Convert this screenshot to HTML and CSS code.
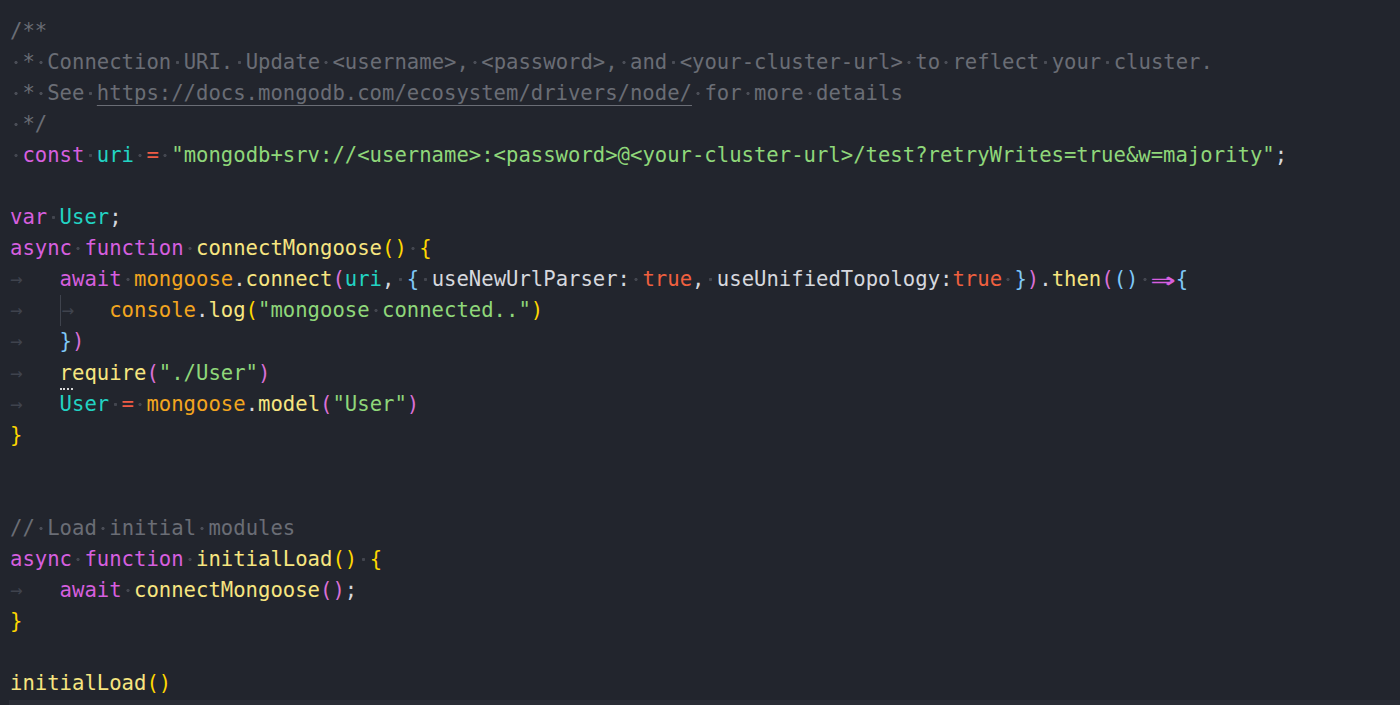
FILE: index.html
```html
<!DOCTYPE html>
<html lang="en">
<head>
<meta charset="utf-8">
<title>mongoose connect</title>
<link rel="stylesheet" href="styles.css">
</head>
<body>
<div class="editor">
<div class="line"><span class="c">/**</span></div>
<div class="line"><span class="c"><i class="s"> </i>*<i class="s"> </i>Connection<i class="s"> </i>URI.<i class="s"> </i>Update<i class="s"> </i>&lt;username&gt;,<i class="s"> </i>&lt;password&gt;,<i class="s"> </i>and<i class="s"> </i>&lt;your-cluster-url&gt;<i class="s"> </i>to<i class="s"> </i>reflect<i class="s"> </i>your<i class="s"> </i>cluster.</span></div>
<div class="line"><span class="c"><i class="s"> </i>*<i class="s"> </i>See<i class="s"> </i><span class="link">https://docs.mongodb.com/ecosystem/drivers/node/</span><i class="s"> </i>for<i class="s"> </i>more<i class="s"> </i>details</span></div>
<div class="line"><span class="c"><i class="s"> </i>*/</span></div>
<div class="line"><i class="s"> </i><span class="k">const</span><i class="s"> </i><span class="v">uri</span><i class="s"> </i><span class="o">=</span><i class="s"> </i><span class="str">"mongodb+srv://&lt;username&gt;:&lt;password&gt;@&lt;your-cluster-url&gt;/test?retryWrites=true&amp;w=majority"</span>;</div>
<div class="line"></div>
<div class="line"><span class="k">var</span><i class="s"> </i><span class="v">User</span>;</div>
<div class="line"><span class="k">async</span><i class="s"> </i><span class="k">function</span><i class="s"> </i><span class="f">connectMongoose</span><span class="b1">()</span><i class="s"> </i><span class="b1">{</span></div>
<div class="line"><span class="tab"><span class="tab-arrow">→</span></span><span class="k">await</span><i class="s"> </i><span class="m">mongoose</span>.<span class="f">connect</span><span class="b2">(</span><span class="v">uri</span>,<i class="s"> </i><span class="b3">{</span><i class="s"> </i>useNewUrlParser:<i class="s"> </i><span class="t">true</span>,<i class="s"> </i>useUnifiedTopology:<span class="t">true</span><i class="s"> </i><span class="b3">}</span><span class="b2">)</span>.<span class="f">then</span><span class="b2">(</span><span class="b3">()</span><i class="s"> </i><span class="lig"><span class="lig-glyph k">⇒</span></span><span class="b3">{</span></div>
<div class="line"><span class="tab"><span class="tab-arrow">→</span></span><span class="tab guide"><span class="tab-arrow">→</span></span><span class="m">console</span>.<span class="f">log</span><span class="b1">(</span><span class="str">"mongoose<i class="s"> </i>connected.."</span><span class="b1">)</span></div>
<div class="line"><span class="tab"><span class="tab-arrow">→</span></span><span class="b3">}</span><span class="b2">)</span></div>
<div class="line"><span class="tab"><span class="tab-arrow">→</span></span><span class="f hint">require</span><span class="b2">(</span><span class="str">"./User"</span><span class="b2">)</span></div>
<div class="line"><span class="tab"><span class="tab-arrow">→</span></span><span class="v">User</span><i class="s"> </i><span class="o">=</span><i class="s"> </i><span class="m">mongoose</span>.<span class="f">model</span><span class="b2">(</span><span class="str">"User"</span><span class="b2">)</span></div>
<div class="line"><span class="b1">}</span></div>
<div class="line"></div>
<div class="line"></div>
<div class="line"><span class="c">//<i class="s"> </i>Load<i class="s"> </i>initial<i class="s"> </i>modules</span></div>
<div class="line"><span class="k">async</span><i class="s"> </i><span class="k">function</span><i class="s"> </i><span class="f">initialLoad</span><span class="b1">()</span><i class="s"> </i><span class="b1">{</span></div>
<div class="line"><span class="tab"><span class="tab-arrow">→</span></span><span class="k">await</span><i class="s"> </i><span class="f">connectMongoose</span><span class="b2">()</span>;</div>
<div class="line"><span class="b1">}</span></div>
<div class="line"></div>
<div class="line"><span class="f">initialLoad</span><span class="b1">()</span></div>
<div class="line current"></div>
</div>
</body>
</html>
```
FILE: styles.css
```css
html, body {
  margin: 0;
  padding: 0;
  background: #22252d;
}

.editor {
  box-sizing: border-box;
  height: 705px;
  overflow: hidden;
  padding: 15.5px 0 0 10px;
  font-family: "DejaVu Sans Mono", "Liberation Mono", monospace;
  font-size: 20.6px;
  line-height: 31.1px;
  color: #d6d8de;
}

.line {
  height: 31.1px;
  white-space: pre;
}

.current {
  margin-left: -1px;
  background: #2a2d36;
}

.s {
  font-style: normal;
  background: radial-gradient(circle at 50% 52%, #43464f 0, #43464f 1.3px, transparent 1.9px);
}

.c { color: #6a6d75; }
.c .s { background: radial-gradient(circle at 50% 52%, #4a4d56 0, #4a4d56 1.3px, transparent 1.9px); }
.link {
  text-decoration: underline;
  text-decoration-color: #6a6d75;
  text-underline-offset: 5px;
  text-decoration-thickness: 1px;
}

.k { color: #d65fdf; }
.v { color: #22d3c3; }
.o { color: #ef5b45; }
.str { color: #8fd77a; }
.f { color: #f7e580; }
.m { color: #f3a51f; }
.t { color: #f0603f; }
.b1 { color: #ffd700; }
.b2 { color: #da70d6; }
.b3 { color: #7fc8f8; }

.tab {
  display: inline-block;
  width: 4ch;
  color: #3f434d;
  vertical-align: baseline;
}

.tab-arrow {
  display: inline-block;
}

.guide {
  background: linear-gradient(#3f434d, #3f434d) left top / 1px 100% no-repeat;
  padding-left: 2px;
  box-sizing: border-box;
}

.lig {
  display: inline-block;
  width: 2ch;
  text-align: center;
}

.lig-glyph {
  display: inline-block;
  font-weight: bold;
  transform: scale(2, 1.25);
}

.hint {
  position: relative;
}

.hint::after {
  content: "";
  position: absolute;
  left: 0;
  bottom: -5px;
  width: 13px;
  border-bottom: 2px dotted #d8d8d8;
}
```
